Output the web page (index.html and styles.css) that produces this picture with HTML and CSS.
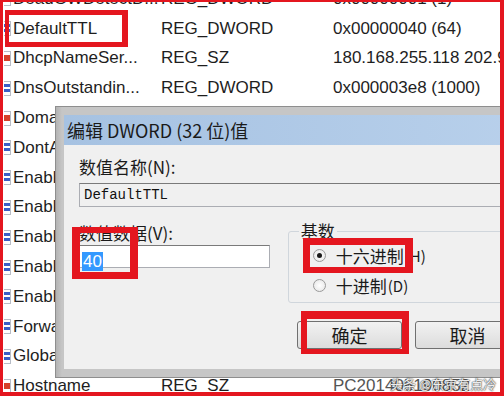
FILE: index.html
```html
<!DOCTYPE html>
<html lang="zh-CN">
<head>
    <meta charset="UTF-8">
    <title>编辑 DWORD (32 位)值</title>
    <link rel="stylesheet" href="styles.css">
</head>
<body>
<div class="screen">

    <div class="reg-list">
        <div class="row"><span class="ico dw"></span><span class="name">DeadGWDetectD...</span><span class="type">REG_DWORD</span><span class="data">0x00000001 (1)</span></div>
        <div class="row"><span class="ico dw"></span><span class="name">DefaultTTL</span><span class="type">REG_DWORD</span><span class="data">0x00000040 (64)</span></div>
        <div class="row"><span class="ico sz"></span><span class="name">DhcpNameSer...</span><span class="type">REG_SZ</span><span class="data">180.168.255.118 202.96.209.5</span></div>
        <div class="row"><span class="ico dw"></span><span class="name">DnsOutstandin...</span><span class="type">REG_DWORD</span><span class="data">0x000003e8 (1000)</span></div>
        <div class="row"><span class="ico sz"></span><span class="name">Domain</span><span class="type">REG_SZ</span><span class="data"></span></div>
        <div class="row"><span class="ico dw"></span><span class="name">DontAddDefa...</span><span class="type">REG_DWORD</span><span class="data">0x00000000 (0)</span></div>
        <div class="row"><span class="ico dw"></span><span class="name">EnableICMPR...</span><span class="type">REG_DWORD</span><span class="data">0x00000001 (1)</span></div>
        <div class="row"><span class="ico dw"></span><span class="name">EnableIPAuto...</span><span class="type">REG_DWORD</span><span class="data">0x00000001 (1)</span></div>
        <div class="row"><span class="ico dw"></span><span class="name">EnablePMTUD...</span><span class="type">REG_DWORD</span><span class="data">0x00000001 (1)</span></div>
        <div class="row"><span class="ico dw"></span><span class="name">EnableSecurit...</span><span class="type">REG_DWORD</span><span class="data">0x00000000 (0)</span></div>
        <div class="row"><span class="ico dw"></span><span class="name">EnableWsd</span><span class="type">REG_DWORD</span><span class="data">0x00000000 (0)</span></div>
        <div class="row"><span class="ico dw"></span><span class="name">ForwardBroad...</span><span class="type">REG_DWORD</span><span class="data">0x00000000 (0)</span></div>
        <div class="row"><span class="ico dw"></span><span class="name">GlobalMaxTcp...</span><span class="type">REG_DWORD</span><span class="data">0x00000000 (0)</span></div>
        <div class="row"><span class="ico sz"></span><span class="name">Hostname</span><span class="type">REG_SZ</span><span class="data host">PC201405190852</span></div>
    </div>

    <div class="dialog">
        <div class="titlebar">编辑 DWORD (32 位)值</div>
        <div class="dlg-body">
            <div class="label">数值名称(N):</div>
            <div class="field readonly">DefaultTTL</div>

            <div class="data-row">
                <div class="data-col">
                    <div class="label">数值数据(V):</div>
                    <div class="field edit"><span class="sel">40</span></div>
                </div>
                <fieldset class="base">
                    <legend>基数</legend>
                    <div class="radio"><span class="dot on"></span>十六进制<span class="key">(H)</span></div>
                    <div class="radio"><span class="dot"></span>十进制<span class="key">(D)</span></div>
                </fieldset>
            </div>

            <div class="buttons">
                <div class="btn">确定</div>
                <div class="btn">取消</div>
            </div>
        </div>
    </div>

    <!-- red annotation boxes -->
    <div class="mark mark-name"></div>
    <div class="mark mark-value"></div>
    <div class="mark mark-hex"></div>
    <div class="mark mark-ok"></div>

    <div class="watermark">头条 @东京有点冷</div>
    <div class="frame"></div>
</div>
</body>
</html>
```

FILE: styles.css
```css
* {
    margin: 0;
    padding: 0;
    box-sizing: border-box;
}

body {
    background: #fff;
    font-family: "Liberation Sans", Arial, "Noto Sans CJK SC", sans-serif;
}

.screen {
    position: relative;
    width: 504px;
    height: 396px;
    overflow: hidden;
    background: #fff;
    color: #1e1e1e;
}

/* registry value list */
.reg-list {
    margin-top: -16px;
    padding-left: 4px;
}

.row {
    display: grid;
    grid-template-columns: 8px 148px 172px 1fr;
    height: 29.8px;
    align-items: center;
    font-size: 17px;
    white-space: nowrap;
}

.name,
.type,
.data {
    overflow: hidden;
    padding-left: 1px;
}

.host {
    color: #555;
}

.ico {
    width: 7px;
    height: 15px;
    border: 1px solid #b7bcc6;
    border-left: none;
}

.ico.dw {
    background: linear-gradient(#fff 0 2px, #3a5fc8 2px 5px, #fff 5px 7px, #3a5fc8 7px 10px, #fff 10px);
}

.ico.sz {
    background: linear-gradient(#fff 0 3px, #d6402a 3px 9px, #fff 9px);
}

/* dialog window */
.dialog {
    position: absolute;
    left: 55px;
    top: 106px;
    width: 470px;
    height: 272px;
    padding: 8px 0 8px 8px;
    border: 1px solid #8e8e8e;
    background: linear-gradient(to right, #b3b3b3, #c6c6c6 6px);
}

.titlebar {
    height: 30px;
    line-height: 30px;
    padding-left: 3px;
    font-family: "Noto Sans CJK SC", sans-serif;
    font-size: 18px;
    color: #1a1a1a;
    background: linear-gradient(to right, #a6c2e2, #b8d0eb);
}

.dlg-body {
    height: 224px;
    padding: 11px 0 0 15px;
    background: #f0f0f0;
    font-family: "Noto Sans CJK SC", sans-serif;
    font-size: 17px;
    color: #1a1a1a;
}

.label {
    height: 22px;
    line-height: 22px;
}

.field {
    border: 1px solid #abadb3;
    border-top-color: #7a7a7a;
}

.field.readonly {
    margin-top: 5px;
    height: 24px;
    line-height: 22px;
    padding-left: 4px;
    background: #f0f0f0;
    font-family: "Liberation Mono", monospace;
    font-size: 14px;
    color: #111;
}

.data-row {
    display: flex;
    margin-top: 14px;
}

.data-col {
    width: 194px;
    padding-top: 1px;
}

.field.edit {
    margin-top: 1px;
    height: 23px;
    padding: 1px 0 0 2px;
    background: #fff;
}

.sel {
    display: inline-block;
    height: 19px;
    line-height: 19px;
    padding: 0 1px;
    background: #3399ff;
    color: #fff;
    font-family: "Liberation Sans", Arial, sans-serif;
    font-size: 17px;
}

.base {
    margin-left: 18px;
    width: 240px;
    height: 82px;
    padding: 0 0 0 10px;
    border: 1px solid #d0d6dc;
    border-radius: 3px;
}

.base legend {
    padding: 0 2px;
    line-height: 20px;
}

.radio {
    display: flex;
    align-items: center;
    height: 30px;
    padding-left: 14px;
}

.radio:first-of-type {
    margin-top: -1px;
}

.dot {
    position: relative;
    width: 13px;
    height: 13px;
    margin-right: 10px;
    border: 1px solid #9a9a9a;
    border-radius: 50%;
    background: radial-gradient(#ffffff, #e4e4e4);
}

.dot.on::after {
    content: "";
    position: absolute;
    left: 3px;
    top: 3px;
    width: 5px;
    height: 5px;
    border-radius: 50%;
    background: #1a1a1a;
}

.key {
    font-size: 15px;
    margin-left: 1px;
}

.buttons {
    display: flex;
    gap: 13px;
    margin: 18px 0 0 218px;
}

.btn {
    width: 105px;
    height: 28px;
    line-height: 26px;
    text-align: center;
    font-size: 18px;
    border: 1px solid #707070;
    border-radius: 3px;
    background: linear-gradient(#f2f2f2, #dcdcdc);
}

/* red highlight boxes drawn over the screenshot */
.mark {
    position: absolute;
    border: 7px solid #e4161f;
}

.mark-name {
    left: 5px;
    top: 10px;
    width: 123px;
    height: 37px;
    border-width: 5px 6px 5px 4px;
}

.mark-value {
    left: 72px;
    top: 227px;
    width: 66px;
    height: 52px;
    border-width: 6px 8px 7px 8px;
}

.mark-hex {
    left: 303px;
    top: 238px;
    width: 110px;
    height: 35px;
    border-width: 7px 8px 6px 7px;
}

.mark-ok {
    left: 301px;
    top: 311px;
    width: 108px;
    height: 43px;
    border-width: 8px 7px 5px 6px;
}

.watermark {
    position: absolute;
    left: 390px;
    top: 374px;
    font-family: "Noto Sans CJK SC", sans-serif;
    font-size: 13px;
    color: rgba(255, 255, 255, 0.92);
    text-shadow: 0 0 2px #333, 0 0 1px #333;
}

.frame {
    position: absolute;
    inset: 0;
    border-style: solid;
    border-color: #e4161f;
    border-width: 2px 4px 4px 3px;
    pointer-events: none;
}
```
